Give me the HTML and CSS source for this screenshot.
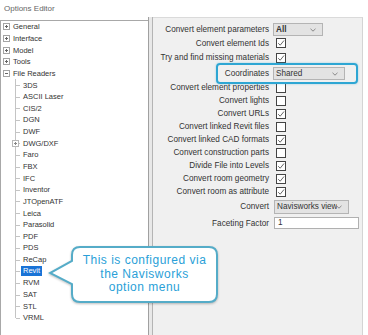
FILE: index.html
```html
<!DOCTYPE html>
<html>
<head>
<meta charset="utf-8">
<link rel="stylesheet" href="styles.css">
</head>
<body>
<div class="title">Options Editor</div>
<div class="main">
  <div class="tree">
    <div class="node top"><svg class="exp" viewBox="0 0 7 7"><rect x="0.5" y="0.5" width="6" height="6" fill="#fff" stroke="#a4a4a4"/><path d="M2 3.5h3M3.5 2v3" stroke="#666"/></svg><span>General</span></div>
    <div class="node top"><svg class="exp" viewBox="0 0 7 7"><rect x="0.5" y="0.5" width="6" height="6" fill="#fff" stroke="#a4a4a4"/><path d="M2 3.5h3M3.5 2v3" stroke="#666"/></svg><span>Interface</span></div>
    <div class="node top"><svg class="exp" viewBox="0 0 7 7"><rect x="0.5" y="0.5" width="6" height="6" fill="#fff" stroke="#a4a4a4"/><path d="M2 3.5h3M3.5 2v3" stroke="#666"/></svg><span>Model</span></div>
    <div class="node top"><svg class="exp" viewBox="0 0 7 7"><rect x="0.5" y="0.5" width="6" height="6" fill="#fff" stroke="#a4a4a4"/><path d="M2 3.5h3M3.5 2v3" stroke="#666"/></svg><span>Tools</span></div>
    <div class="node top"><svg class="exp" viewBox="0 0 7 7"><rect x="0.5" y="0.5" width="6" height="6" fill="#fff" stroke="#a4a4a4"/><path d="M2 3.5h3" stroke="#666"/></svg><span>File Readers</span></div>
    <div class="node child"><span>3DS</span></div>
    <div class="node child"><span>ASCII Laser</span></div>
    <div class="node child"><span>CIS/2</span></div>
    <div class="node child"><span>DGN</span></div>
    <div class="node child"><span>DWF</span></div>
    <div class="node child has"><svg class="exp sub" viewBox="0 0 7 7"><rect x="0.5" y="0.5" width="6" height="6" fill="#fff" stroke="#b8b8b8"/><path d="M2 3.5h3M3.5 2v3" stroke="#888"/></svg><span>DWG/DXF</span></div>
    <div class="node child"><span>Faro</span></div>
    <div class="node child"><span>FBX</span></div>
    <div class="node child"><span>IFC</span></div>
    <div class="node child"><span>Inventor</span></div>
    <div class="node child"><span>JTOpenATF</span></div>
    <div class="node child"><span>Leica</span></div>
    <div class="node child"><span>Parasolid</span></div>
    <div class="node child"><span>PDF</span></div>
    <div class="node child"><span>PDS</span></div>
    <div class="node child"><span>ReCap</span></div>
    <div class="node child"><span class="sel-item">Revit</span></div>
    <div class="node child"><span>RVM</span></div>
    <div class="node child"><span>SAT</span></div>
    <div class="node child"><span>STL</span></div>
    <div class="node child last"><span>VRML</span></div>
  </div>
  <div class="splitter"></div>
  <div class="props">
    <div class="row h14"><label>Convert element parameters</label><div class="sel w-all"><span>All</span><svg class="chev" viewBox="0 0 6 4"><path d="M0.5 0.8L3 3.2L5.5 0.8" fill="none" stroke="#888"/></svg></div></div>
    <div class="row h14"><label>Convert element Ids</label><div class="cb"><svg viewBox="0 0 8 8"><path d="M1.2 4.2L3.2 6.2L7 1.5" fill="none" stroke="#666"/></svg></div></div>
    <div class="row h15"><label>Try and find missing materials</label><div class="cb"><svg viewBox="0 0 8 8"><path d="M1.2 4.2L3.2 6.2L7 1.5" fill="none" stroke="#666"/></svg></div></div>
    <div class="row h16"><label>Coordinates</label><div class="sel w-shared"><span>Shared</span><svg class="chev" viewBox="0 0 6 4"><path d="M0.5 0.8L3 3.2L5.5 0.8" fill="none" stroke="#888"/></svg></div></div>
    <div class="row"><label>Convert element properties</label><div class="cb"></div></div>
    <div class="row"><label>Convert lights</label><div class="cb"></div></div>
    <div class="row"><label>Convert URLs</label><div class="cb"><svg viewBox="0 0 8 8"><path d="M1.2 4.2L3.2 6.2L7 1.5" fill="none" stroke="#666"/></svg></div></div>
    <div class="row"><label>Convert linked Revit files</label><div class="cb"></div></div>
    <div class="row"><label>Convert linked CAD formats</label><div class="cb"><svg viewBox="0 0 8 8"><path d="M1.2 4.2L3.2 6.2L7 1.5" fill="none" stroke="#666"/></svg></div></div>
    <div class="row"><label>Convert construction parts</label><div class="cb"></div></div>
    <div class="row"><label>Divide File into Levels</label><div class="cb"><svg viewBox="0 0 8 8"><path d="M1.2 4.2L3.2 6.2L7 1.5" fill="none" stroke="#666"/></svg></div></div>
    <div class="row"><label>Convert room geometry</label><div class="cb"><svg viewBox="0 0 8 8"><path d="M1.2 4.2L3.2 6.2L7 1.5" fill="none" stroke="#666"/></svg></div></div>
    <div class="row"><label>Convert room as attribute</label><div class="cb"><svg viewBox="0 0 8 8"><path d="M1.2 4.2L3.2 6.2L7 1.5" fill="none" stroke="#666"/></svg></div></div>
    <div class="row h17"><label>Convert</label><div class="sel w-conv"><span class="clip">Navisworks view</span><svg class="chev" viewBox="0 0 6 4"><path d="M0.5 0.8L3 3.2L5.5 0.8" fill="none" stroke="#888"/></svg></div></div>
    <div class="row h16"><label>Faceting Factor</label><div class="inp">1</div></div>
    <div class="hl"></div>
  </div>
</div>
<div class="callout">
  <svg class="callout-shape" viewBox="0 0 172 62" width="172" height="62"><path d="M32 3H161Q169 3 169 11V50Q169 58 161 58H32Q24 58 24 50V40L2 29L24 17V11Q24 3 32 3Z" fill="#fff" stroke="#55acc8" stroke-width="2"/></svg>
  <div class="callout-text"><div class="cl">This is configured via</div><div class="cl">the Navisworks</div><div class="cl">option menu</div></div>
</div>
</body>
</html>
```

FILE: styles.css
```css
* { box-sizing: border-box; margin: 0; padding: 0; }
html, body { width: 368px; height: 335px; overflow: hidden; background: #fff; }
body { font-family: "Liberation Sans", Arial, sans-serif; color: #333; position: relative; }

.title { height: 17px; line-height: 17px; padding-left: 4px; font-size: 8px; color: #666; }

.main { display: flex; height: 318px; padding-right: 5px; }

.tree { width: 148px; margin-top: 3px; border-top: 1px solid #a8a8a8; border-left: 1px solid #a8a8a8; background: #fff; font-size: 7.5px; color: #333; }
.node { height: 11.65px; display: flex; align-items: center; white-space: nowrap; }
.top { padding-left: 2px; }
.exp { width: 7px; height: 7px; margin-right: 3px; flex: none; }
.child { position: relative; padding-left: 22px; }
.child::before { content: ""; position: absolute; left: 14px; top: 0; bottom: 0; border-left: 1px solid #c4c4c4; }
.child.last::before { bottom: 50%; }
.child::after { content: ""; position: absolute; left: 15px; top: 50%; width: 4px; border-top: 1px solid #c4c4c4; }
.child.has { padding-left: 11px; }
.exp.sub { position: relative; z-index: 1; margin-right: 4px; }
.sel-item { background: #1a73d6; color: #fff; padding: 0 2px; margin-left: -2px; line-height: 10px; }

.splitter { width: 5px; border-left: 1px solid #a0a0a0; border-right: 1px solid #b4b4b4; background: #e8e8e8; }

.props { flex: 1; background: #f0f0f0; border-top: 1px solid #dadada; border-right: 1px solid #d4d4d4; position: relative; padding-top: 4px; font-size: 8.2px; color: #333; }
.row { display: flex; align-items: center; height: 13px; }
.row.h14 { height: 14px; }
.row.h15 { height: 15px; }
.row.h16 { height: 16px; }
.row.h17 { height: 17px; }
.row label { width: 116px; margin-right: 5px; text-align: right; white-space: nowrap; flex: none; }

.cb { width: 10px; height: 10px; border: 1px solid #444; background: #fff; margin-left: 2px; display: flex; align-items: center; justify-content: center; }
.cb svg { width: 8px; height: 8px; }

.sel { height: 13px; border: 1px solid #b4b4b4; background: #e3e3e3; display: flex; align-items: center; padding-left: 2px; position: relative; margin-left: -1px; }
.sel .chev { position: absolute; right: 6px; top: 4px; width: 6px; height: 4px; }
.w-all { width: 50px; }
.w-all span { font-weight: bold; }
.w-shared { width: 72px; }
.w-conv { width: 75px; height: 14px; margin-left: 0; }
.clip { width: 60px; overflow: hidden; white-space: nowrap; }

.inp { width: 85px; height: 12px; border: 1px solid #b0b0b0; background: #fff; padding-left: 3px; line-height: 10px; }

.hl { position: absolute; left: 63px; top: 45px; width: 142px; height: 21px; border: 2px solid #2ea6d3; border-radius: 4px; box-shadow: 0 0 2px rgba(46, 166, 211, 0.5); }

.callout { position: absolute; left: 48px; top: 244px; width: 172px; height: 62px; }
.callout-shape { position: absolute; left: 0; top: 0; filter: drop-shadow(0 1px 1px rgba(0, 0, 0, 0.25)); }
.callout-text { position: relative; margin-left: 24px; width: 145px; padding-top: 10.3px; text-align: center; font-size: 12px; letter-spacing: 0.5px; color: #2a9fd8; }
.cl { height: 13.4px; line-height: 13.4px; white-space: nowrap; }
```
